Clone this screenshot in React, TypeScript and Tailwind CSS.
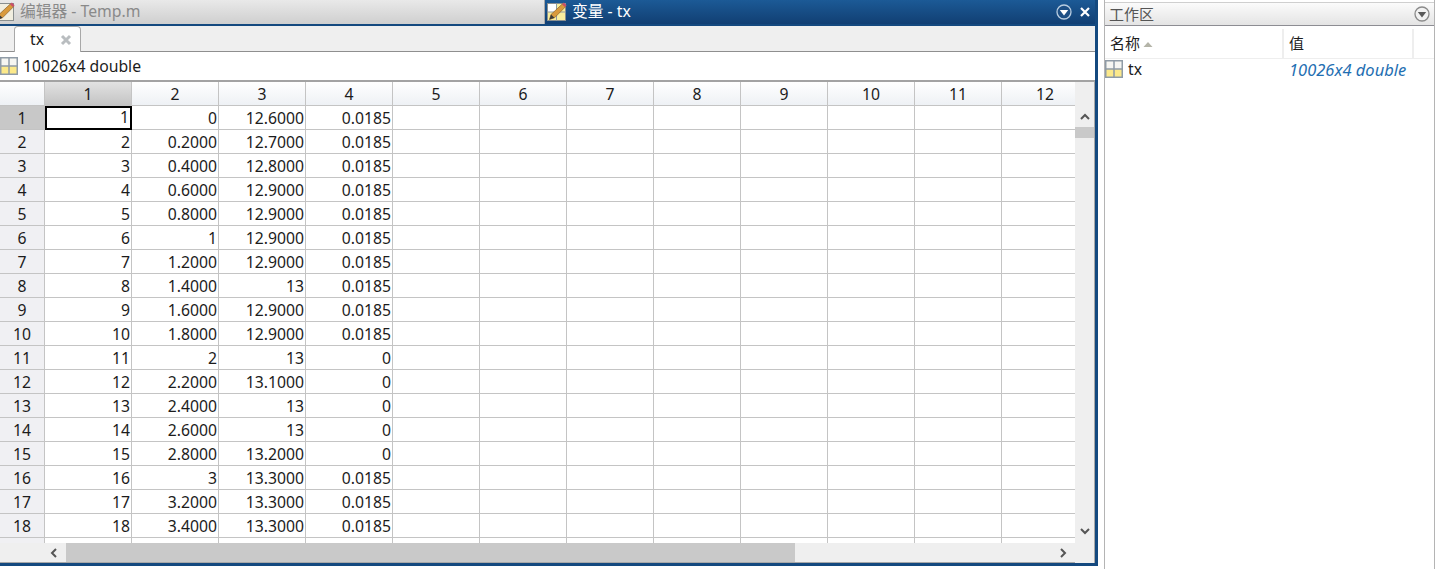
const FONT = "font-['Noto_Sans','Noto_Sans_CJK_SC',sans-serif]";

const rows: [string, string, string][] = [
  ['0', '12.6000', '0.0185'],
  ['0.2000', '12.7000', '0.0185'],
  ['0.4000', '12.8000', '0.0185'],
  ['0.6000', '12.9000', '0.0185'],
  ['0.8000', '12.9000', '0.0185'],
  ['1', '12.9000', '0.0185'],
  ['1.2000', '12.9000', '0.0185'],
  ['1.4000', '13', '0.0185'],
  ['1.6000', '12.9000', '0.0185'],
  ['1.8000', '12.9000', '0.0185'],
  ['2', '13', '0'],
  ['2.2000', '13.1000', '0'],
  ['2.4000', '13', '0'],
  ['2.6000', '13', '0'],
  ['2.8000', '13.2000', '0'],
  ['3', '13.3000', '0.0185'],
  ['3.2000', '13.3000', '0.0185'],
  ['3.4000', '13.3000', '0.0185'],
];

const emptyCols = [5, 6, 7, 8, 9, 10, 11, 12];

function GridIcon() {
  return (
    <svg width="18" height="18" viewBox="0 0 18 18" className="shrink-0">
      <rect x="1" y="1" width="16" height="8" fill="#f6f6f2" />
      <rect x="1" y="9" width="16" height="8" fill="#fce98a" />
      <rect x="0.75" y="0.75" width="16.5" height="16.5" fill="none" stroke="#8f9ba6" strokeWidth="1.5" />
      <path d="M9 0.5V17.5M0.5 9H17.5" stroke="#8f9ba6" strokeWidth="1.5" />
    </svg>
  );
}

function EditorIcon({ dim }: { dim?: boolean }) {
  return (
    <svg width="20" height="20" viewBox="0 0 20 20" className="shrink-0">
      <rect x="0.5" y="1.5" width="18" height="17" fill={dim ? '#f1eee0' : '#f8ee9e'} stroke="#8a8f8f" />
      {!dim && <rect x="1" y="2" width="8.5" height="8" fill="#ffffff" />}
      {!dim && <path d="M9.5 1.5V18.5M0.5 10H18.5" stroke="#8f9aa3" />}
      <path d="M2.5 17.5L4 12.5L15.5 1.8L18.5 4.8L7.5 15.8Z" fill="#d99a3c" stroke="#7d5520" strokeWidth="0.6" />
      <path d="M2.5 17.5L4 12.5L7.5 15.8Z" fill="#3a3a3a" />
      <path d="M15 2.2L16.8 0.5L19.6 3.2L18 4.9Z" fill="#c9506a" />
    </svg>
  );
}

function CircleMenu({ light }: { light?: boolean }) {
  return (
    <svg width="16" height="16" viewBox="0 0 16 16" className="shrink-0">
      <circle cx="8" cy="8" r="7" fill={light ? '#1d4f85' : '#f2f2f2'} stroke={light ? '#b9cde0' : '#8a8a8a'} strokeWidth="1.3" />
      <path d="M3.8 6H12.2L8 11.5Z" fill={light ? '#ffffff' : '#5a5a5a'} />
    </svg>
  );
}

function Chevron({ dir }: { dir: 'up' | 'down' | 'left' | 'right' }) {
  const d = {
    up: 'M1 7L5 3L9 7',
    down: 'M1 3L5 7L9 3',
    left: 'M7 1L3 5L7 9',
    right: 'M3 1L7 5L3 9',
  }[dir];
  return (
    <svg width="10" height="10" viewBox="0 0 10 10" className="shrink-0">
      <path d={d} fill="none" stroke="#555555" strokeWidth="2" />
    </svg>
  );
}

function HeaderCell({ label, active }: { label: string; active?: boolean }) {
  return (
    <div
      className={`w-[87px] shrink-0 h-full pt-[2px] flex items-center justify-center border-r border-[#c4c4c4] ${
        active ? 'bg-gradient-to-b from-[#e2e2e2] to-[#c4c4c4]' : ''
      }`}
    >
      {label}
    </div>
  );
}

function DataRow({ index, values }: { index: number; values: [string, string, string] }) {
  const first = index === 1;
  return (
    <div className="flex h-[24px] shrink-0 text-[15.75px] text-[#1c1c1c]">
      <div
        className={`w-[45px] shrink-0 pt-[2px] flex items-center justify-center border-r border-b border-[#c4c4c4] ${
          first ? 'bg-[#c8c8c8]' : 'bg-[#f0f0f3]'
        }`}
      >
        {index}
      </div>
      <div
        className={`w-[87px] shrink-0 flex items-center justify-end pr-[1px] ${
          first ? 'border-2 border-black bg-white' : 'pt-[2px] border-r border-b border-[#c4c4c4]'
        }`}
      >
        {index}
      </div>
      {values.map((v, i) => (
        <div key={i} className="w-[87px] shrink-0 pt-[2px] flex items-center justify-end pr-[1px] border-r border-b border-[#c4c4c4]">
          {v}
        </div>
      ))}
      {emptyCols.map((c) => (
        <div key={c} className="w-[87px] shrink-0 border-r border-b border-[#c4c4c4]" />
      ))}
    </div>
  );
}

// the row below 18 only shows a few pixels of its grid lines
function PartialRow() {
  return (
    <div className="flex h-[24px] shrink-0">
      <div className="w-[45px] shrink-0 border-r border-[#c4c4c4] bg-[#f0f0f3]" />
      {[1, 2, 3, 4, ...emptyCols].map((c) => (
        <div key={c} className="w-[87px] shrink-0 border-r border-[#c4c4c4]" />
      ))}
    </div>
  );
}

export default function App() {
  return (
    <div className={`w-[1437px] h-[569px] overflow-hidden bg-white flex ${FONT}`}>
      {/* variable editor */}
      <div className="w-[1098px] h-[566px] shrink-0 flex flex-col border-r-[3px] border-b-[3px] border-[#14497f] bg-[#efefef]">
        <div className="flex h-[26px] shrink-0 border-b-2 border-[#14497f]">
          <div className="w-[545px] flex items-center overflow-hidden bg-gradient-to-b from-[#e9e9e9] to-[#cfcfcf] border-r border-[#a8a8a8] text-[15.75px] text-[#8a8a8a]">
            <div className="-ml-[5px]">
              <EditorIcon dim />
            </div>
            <span className="ml-[5px]">编辑器 - Temp.m</span>
          </div>
          <div className="flex-1 flex items-center bg-gradient-to-b from-[#1c5a96] to-[#113f73] text-white text-[15.75px]">
            <div className="ml-[2px]">
              <EditorIcon />
            </div>
            <span className="ml-[5px]">变量 - tx</span>
            <div className="ml-auto mr-[4px] flex items-center gap-[7px]">
              <CircleMenu light />
              <svg width="12" height="12" viewBox="0 0 12 12">
                <path d="M2 2L10 10M10 2L2 10" stroke="#ffffff" strokeWidth="2.2" />
              </svg>
            </div>
          </div>
        </div>

        <div className="flex h-[26px] shrink-0 items-end border-b border-[#8f8f8f] pl-[14px]">
          <div className="w-[67px] h-[26px] -mb-[1px] flex items-center bg-white border border-b-0 border-[#a8a8a8] rounded-t-[4px] text-[15.75px] text-[#1c1c1c] pl-[15px]">
            <span>tx</span>
            <svg width="14" height="14" viewBox="0 0 14 14" className="ml-[15px]">
              <path d="M3 3L11 11M11 3L3 11" stroke="#b9bdc0" strokeWidth="3" />
            </svg>
          </div>
        </div>

        <div className="flex h-[30px] shrink-0 items-center gap-[5px] bg-white text-[15.75px] text-[#1c1c1c] border-b-2 border-[#a3a3a3]">
          <GridIcon />
          <span className="pt-[2px]">10026x4 double</span>
        </div>

        <div className="flex-1 min-h-0 flex">
          <div className="flex-1 min-w-0 flex flex-col">
            <div className="h-[461px] shrink-0 overflow-hidden flex flex-col bg-white">
              <div className="flex h-[24px] shrink-0 text-[15.75px] text-[#1c1c1c] bg-gradient-to-b from-white to-[#eef1f5] border-b border-[#c4c4c4]">
                <div className="w-[45px] shrink-0 border-r border-[#c4c4c4]" />
                <HeaderCell label="1" active />
                {[2, 3, 4, 5, 6, 7, 8, 9, 10, 11, 12].map((c) => (
                  <HeaderCell key={c} label={String(c)} />
                ))}
              </div>
              {rows.map((r, i) => (
                <DataRow key={i} index={i + 1} values={r} />
              ))}
              <PartialRow />
            </div>
            <div className="flex-1 flex items-center border-b border-[#a8a8a8]">
              <div className="w-[45px] shrink-0" />
              <div className="w-[21px] shrink-0 flex pl-[4px]">
                <Chevron dir="left" />
              </div>
              <div className="flex-1 flex h-full items-center">
                <div className="w-[729px] h-full bg-[#c9c9c9]" />
                <div className="flex-1" />
                <div className="w-[16px] shrink-0 flex justify-center">
                  <Chevron dir="right" />
                </div>
              </div>
              <div className="w-[4px] shrink-0" />
            </div>
          </div>
          <div className="w-[20px] shrink-0 flex flex-col items-center border-r border-[#a8a8a8]">
            <div className="h-[45px] flex items-end justify-center pb-[5px] shrink-0">
              <Chevron dir="up" />
            </div>
            <div className="w-[19px] h-[11px] bg-[#c9c9c9] shrink-0" />
            <div className="flex-1" />
            <div className="pb-[27px] flex justify-center shrink-0">
              <Chevron dir="down" />
            </div>
          </div>
        </div>
      </div>

      {/* workspace */}
      <div className="ml-[6px] w-[331px] h-[569px] shrink-0 flex flex-col border-l border-r border-[#b4b4b4]">
        <div className="flex h-[24px] mt-[2px] shrink-0 items-center justify-between bg-gradient-to-b from-[#fbfbfb] to-[#e4e4e4] border-t border-[#cfcfcf] border-b border-b-[#8d8d93] pl-[4px] pr-[4px] text-[15px] text-[#555555]">
          <span>工作区</span>
          <CircleMenu />
        </div>
        <div className="flex h-[33px] pt-[3px] shrink-0 text-[15px] text-[#1c1c1c] border-b border-[#eeeeee]">
          <div className="w-[179px] flex items-center pl-[5px] border-r-2 border-[#eeeeee]">
            <span>名称</span>
            <svg width="10" height="6" viewBox="0 0 10 6" className="ml-[3px]">
              <path d="M0.5 6L5 1L9.5 6Z" fill="#b4b4a8" />
            </svg>
          </div>
          <div className="w-[130px] flex items-center pl-[5px] border-r-2 border-[#eeeeee]">值</div>
        </div>
        <div className="flex h-[20px] shrink-0 items-center text-[15.75px]">
          <GridIcon />
          <span className="ml-[5px] w-[161px] pt-[2px] text-[#1c1c1c]">tx</span>
          <span className="italic pt-[2px] text-[#1f6fb2] text-[16.5px]">10026x4 double</span>
        </div>
      </div>
    </div>
  );
}
